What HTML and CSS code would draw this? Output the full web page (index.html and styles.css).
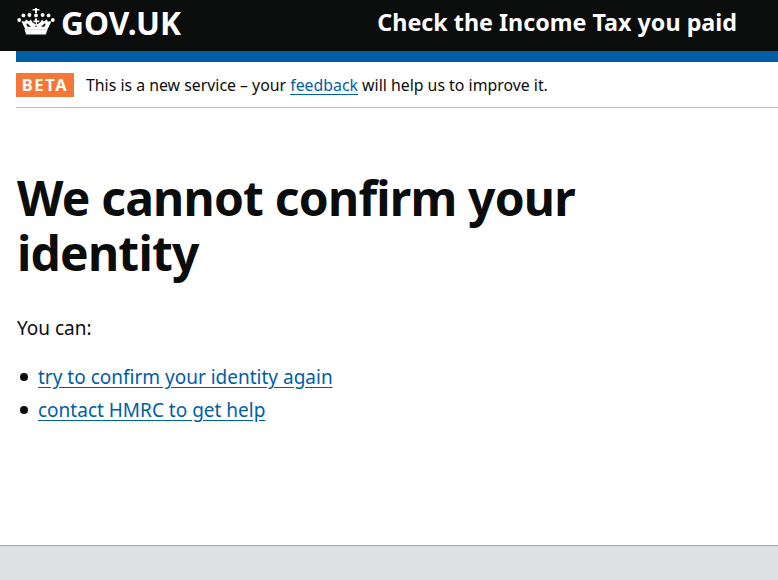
FILE: index.html
```html
<!DOCTYPE html>
<html lang="en">
<head>
    <meta charset="UTF-8">
    <meta name="viewport" content="width=device-width, initial-scale=1.0">
    <title>We cannot confirm your identity</title>
    <link rel="stylesheet" href="styles.css">
</head>
<body>

<header class="site-header">
    <a class="logo" href="#">
        <svg class="crown" viewBox="0 0 38 28" width="38" height="28" aria-hidden="true">
            <g fill="#fff">
                <path d="M18 2.4h-2.4V.9H18V0h2v.9h2.4v1.5H20v2.8h-2z"/>
                <circle cx="19" cy="7.4" r="1.9"/>
                <circle cx="12.4" cy="7" r="1.9"/>
                <circle cx="25.6" cy="7" r="1.9"/>
                <circle cx="6.4" cy="7.4" r="1.9"/>
                <circle cx="31.6" cy="7.4" r="1.9"/>
                <circle cx="2.2" cy="12" r="1.9"/>
                <circle cx="35.8" cy="12" r="1.9"/>
                <path fill-rule="evenodd" d="M18 10.6h2v2h2.4v1.6H20v2.4l3.2-2 1.8-3 1.6 2 3.2-2 1 2 3.6-.4-4 8.4H8.4l-4-8.4 3.6.4 1-2 3.2 2 1.6-2 1.8 3 3.2 2v-2.4h-2.4v-1.6H18zM9 15.4l1.6 3.4h3.4l-2.6-2.2-.8-1.4-.6 1zM29 15.4l-1.6 3.4H24l2.6-2.2.8-1.4.6 1zM18.2 18.8h1.6v-1h-1.6z"/>
                <path d="M7.4 21.2h23.2l-1.8 5.2H9.2z"/>
            </g>
        </svg>
        <span>GOV.UK</span>
    </a>
    <a class="service-name" href="#">Check the Income Tax you paid</a>
</header>

<div class="blue-bar"></div>

<div class="phase-banner">
    <strong class="phase-tag">BETA</strong>
    <span>This is a new service – your <a href="#">feedback</a> will help us to improve it.</span>
</div>

<main class="content">
    <h1>We cannot confirm your identity</h1>
    <p>You can:</p>
    <ul>
        <li><a href="#">try to confirm your identity again</a></li>
        <li><a href="#">contact HMRC to get help</a></li>
    </ul>
</main>

<footer class="site-footer"></footer>

</body>
</html>
```

FILE: styles.css
```css
html, body {
    height: 100%;
}
body {
    display: flex;
    flex-direction: column;
    margin: 0;
    overflow: hidden;
    font-family: "Noto Sans", Arial, sans-serif;
    color: #0b0c0c;
    background-color: #fff;
}
a {
    color: #005ea5;
    text-underline-offset: 3px;
}
.site-header {
    display: flex;
    justify-content: space-between;
    align-items: center;
    height: 51px;
    padding: 0 41px 7px 17px;
    box-sizing: border-box;
    background-color: #0b0c0c;
}
.site-header a {
    color: #fff;
    text-decoration: none;
    font-weight: 700;
}
.logo {
    display: flex;
    align-items: center;
    gap: 6px;
    font-size: 31.7px;
}
.crown {
    display: block;
}
.service-name {
    font-size: 23.3px;
}
.blue-bar {
    height: 11px;
    margin-left: 16px;
    background-color: #005ea5;
}
.phase-banner {
    display: flex;
    align-items: center;
    gap: 12px;
    height: 46px;
    margin-left: 16px;
    box-sizing: border-box;
    border-bottom: 1px solid #bfc1c3;
    font-size: 15.85px;
}
.phase-tag {
    width: 58px;
    height: 24px;
    line-height: 24px;
    text-align: center;
    font-size: 16.5px;
    letter-spacing: 1.6px;
    color: #fff;
    background-color: #f47738;
}
.content {
    flex: 1;
    padding: 62px 17px 0;
}
h1 {
    width: 600px;
    margin: 0 0 34px;
    font-size: 48px;
    line-height: 55px;
    font-weight: 700;
    letter-spacing: -0.8px;
}
p {
    margin: 0 0 21px;
    font-size: 19px;
    line-height: 28px;
}
ul {
    margin: 0;
    padding: 0 0 0 3px;
    list-style: none;
    font-size: 19px;
    line-height: 28px;
}
li {
    display: flex;
    align-items: center;
    gap: 10px;
    margin-bottom: 5px;
}
li::before {
    content: "";
    width: 8px;
    height: 8px;
    border-radius: 50%;
    background-color: #0b0c0c;
}
.site-footer {
    height: 34px;
    border-top: 1px solid #a1acb2;
    background-color: #dee0e2;
}
```
